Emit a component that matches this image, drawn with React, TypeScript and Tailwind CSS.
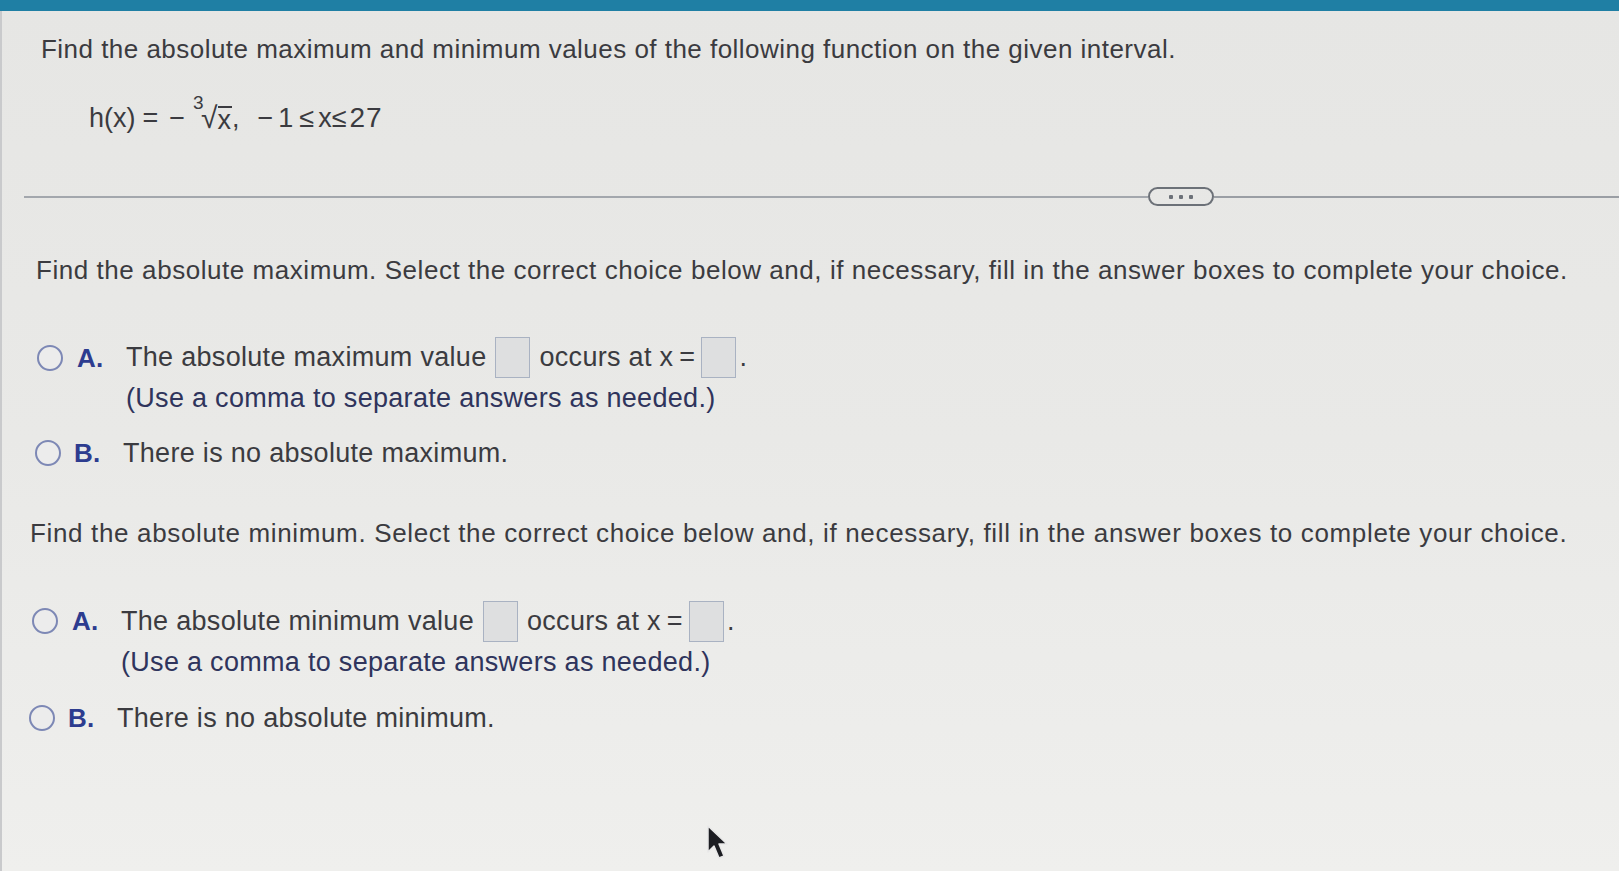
import type { ReactNode } from 'react';

function Radio() {
  return <span className="inline-block w-[26px] h-[26px] rounded-full border-[2.5px] border-[#7d88b5] bg-[#ececec] shrink-0" />;
}

function AnswerBox() {
  return <span className="inline-block w-[35px] h-[41px] border-[1.5px] border-[#a9b2c2] bg-[#dedfe0] align-middle mx-[9px]" />;
}

function Choice({ letter, children, indent, radioGap }: { letter: string; children: ReactNode; indent: string; radioGap: string }) {
  return (
    <div className={`flex items-start ${indent}`}>
      <div className="h-[34px] flex items-center">
        <Radio />
      </div>
      <div className={`w-[49px] ${radioGap} h-[34px] flex items-center font-bold text-[#2d3c8f] text-[26px]`}>{letter}</div>
      <div className="flex-1">{children}</div>
    </div>
  );
}

function Cursor() {
  return (
    <svg width="26" height="38" viewBox="0 0 26 38" className="absolute left-[706px] top-[824px]">
      <path d="M2 2 L2 28 L8 22 L13 34 L18 32 L13 20 L21 20 Z" fill="#1c1d22" stroke="#e8e8e8" strokeWidth="1.5" strokeLinejoin="round" />
    </svg>
  );
}

export default function App() {
  return (
    <div
      className="relative w-[1619px] h-[871px] overflow-hidden bg-gradient-to-b from-[#e6e6e4] via-[#e9e9e7] to-[#efefed] text-[#3b3b40]"
      style={{ fontFamily: '"Liberation Sans", Arial, sans-serif' }}
    >
      <div className="h-[11px] bg-[#1f7fa4]" />
      <div className="border-l-[2px] border-[#c9cacc] h-[860px]">
        <div className="pl-[39px] pt-[23px] text-[26px] leading-[30px] tracking-[0.47px]">
          Find the absolute maximum and minimum values of the following function on the given interval.
        </div>

        <div className="pl-[87px] pt-[39px] text-[27px] leading-[30px] flex items-end">
          <span>h(x)</span>
          <span className="ml-[7px]">=</span>
          <span className="ml-[11px]">−</span>
          <span className="relative ml-[16px] inline-flex items-end">
            <span className="absolute -left-[8px] -top-[10px] text-[19px] leading-none">3</span>
            <span className="text-[30px] leading-[30px]">√</span>
            <span className="border-t-[2px] border-[#3b3b40] leading-[25px] pr-[1px]">x</span>
          </span>
          <span>,</span>
          <span className="ml-[18px]">−</span>
          <span className="ml-[5px]">1</span>
          <span className="ml-[6px]">≤</span>
          <span className="ml-[4px]">x</span>
          <span className="ml-[0px]">≤</span>
          <span className="ml-[3px] text-[28px] tracking-[1px]">27</span>
        </div>

        <div className="mt-[54px] ml-[22px] flex items-center">
          <div className="w-[1124px] h-[2px] bg-[#a3a7ad]" />
          <div className="w-[66px] h-[19px] rounded-full border-[2px] border-[#6c7178] flex items-center justify-center gap-[6px] shrink-0">
            <span className="w-[4px] h-[4px] rounded-[1px] bg-[#6c7178]" />
            <span className="w-[4px] h-[4px] rounded-[1px] bg-[#6c7178]" />
            <span className="w-[4px] h-[4px] rounded-[1px] bg-[#6c7178]" />
          </div>
          <div className="flex-1 h-[2px] bg-[#9a9ea4]" />
        </div>

        <div className="pl-[34px] mt-[49px] text-[26px] leading-[30px] tracking-[0.55px]">
          Find the absolute maximum. Select the correct choice below and, if necessary, fill in the answer boxes to complete your choice.
        </div>

        <div className="mt-[56px] text-[27px] leading-[34px] tracking-[0.3px]">
          <Choice letter="A." indent="pl-[35px]" radioGap="ml-[14px]">
            <div className="flex items-center h-[34px] -mt-[1px]">
              <span>The absolute maximum value</span>
              <AnswerBox />
              <span>occurs at x</span>
              <span className="ml-[6px] mr-[-3px]">=</span>
              <AnswerBox />
              <span className="-ml-[6px]">.</span>
            </div>
            <div className="mt-[7px] text-[#2f345c]">(Use a comma to separate answers as needed.)</div>
          </Choice>
          <div className="mt-[21px]">
            <Choice letter="B." indent="pl-[33px]" radioGap="ml-[13px]">
              <div>There is no absolute maximum.</div>
            </Choice>
          </div>
        </div>

        <div className="pl-[28px] mt-[48px] text-[26px] leading-[30px] tracking-[0.65px]">
          Find the absolute minimum. Select the correct choice below and, if necessary, fill in the answer boxes to complete your choice.
        </div>

        <div className="mt-[56px] text-[27px] leading-[34px] tracking-[0.3px]">
          <Choice letter="A." indent="pl-[30px]" radioGap="ml-[14px]">
            <div className="flex items-center h-[34px]">
              <span>The absolute minimum value</span>
              <AnswerBox />
              <span>occurs at x</span>
              <span className="ml-[6px] mr-[-3px]">=</span>
              <AnswerBox />
              <span className="-ml-[6px]">.</span>
            </div>
            <div className="mt-[7px] text-[#2f345c]">(Use a comma to separate answers as needed.)</div>
          </Choice>
          <div className="mt-[22px]">
            <Choice letter="B." indent="pl-[27px]" radioGap="ml-[13px]">
              <div>There is no absolute minimum.</div>
            </Choice>
          </div>
        </div>
      </div>
      <Cursor />
    </div>
  );
}
